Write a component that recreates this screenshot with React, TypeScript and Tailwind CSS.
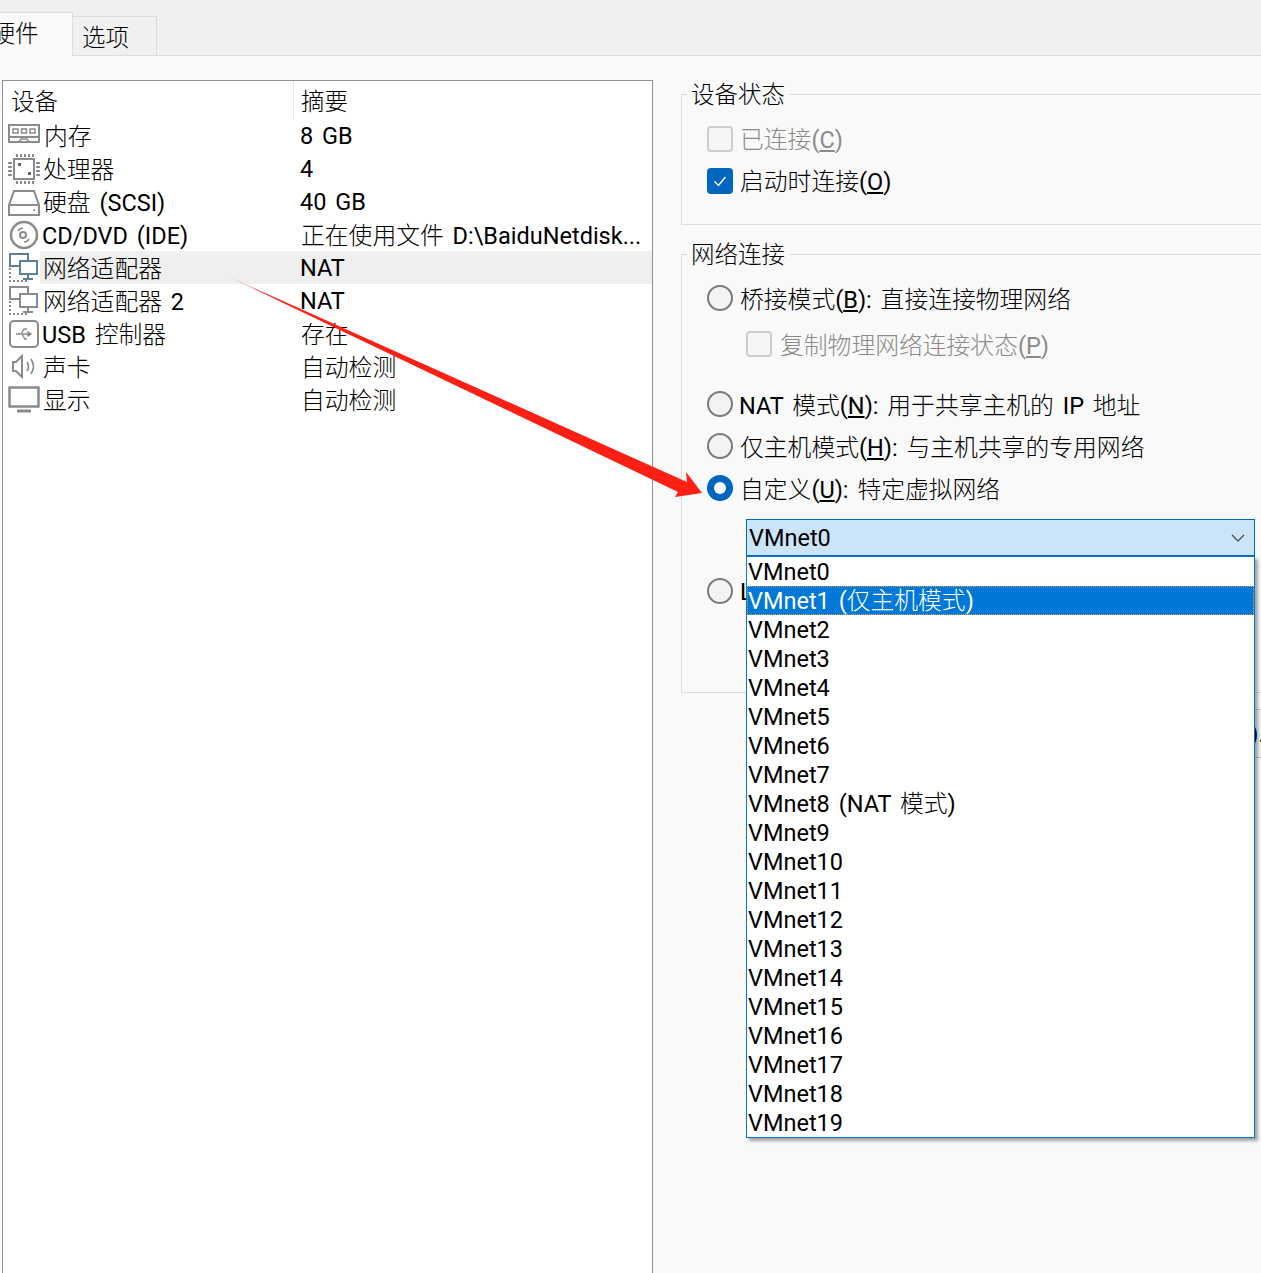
import React from "react";

const I = ({ children }: { children: React.ReactNode }) => (
  <svg width="32" height="32" viewBox="0 0 32 32" fill="none" stroke="#8b8b8b" strokeWidth="2" className="shrink-0">
    {children}
  </svg>
);

const MemoryIcon = () => (
  <I>
    <path d="M1 5h30v17H1z" />
    <path d="M1 17h30" />
    <path d="M1 22h10l2-3h6l2 3h10" strokeWidth="1.500" />
    <path d="M5 9h5v4H5zM13.500 9h5v4h-5zM22 9h5v4h-5z" strokeWidth="1.500" />
  </I>
);
const CpuIcon = () => (
  <I>
    <path d="M6 6h20v20H6z" />
    <path d="M9 1v3M13 1v3M17 1v3M21 1v3M25 1v3M9 28v3M13 28v3M17 28v3M21 28v3M25 28v3M0 10h4M0 14h4M0 18h4M0 22h4M28 10h4M28 14h4M28 18h4M28 22h4" />
    <rect x="10" y="10" width="3" height="3" fill="#666" stroke="none" />
    <rect x="20" y="19" width="3" height="3" fill="#666" stroke="none" />
  </I>
);
const DiskIcon = () => (
  <I>
    <path d="M1 19 6 5h20l5 14v10H1z" />
    <path d="M1 19h30" />
    <circle cx="26" cy="24" r="1" fill="#8b8b8b" stroke="none" />
  </I>
);
const CdIcon = () => (
  <I>
    <circle cx="16" cy="16" r="13" strokeWidth="2.500" />
    <circle cx="15" cy="16" r="3" />
    <path d="M10 12q2-3 5-3M21 20q-2 3-5 3" strokeWidth="1.500" />
  </I>
);
const NetIcon = ({ c }: { c: string }) => (
  <svg width="32" height="32" viewBox="-1 0 32 32" fill="none" stroke={c} strokeWidth="2" className="shrink-0">
    <path d="M1 2h18v12H1z" />
    <path d="M11 9h17v13H11z" fill="white" />
    <path d="M19 22v4M14 27h10" />
    <path d="M1 16v13h17" stroke="#8b8b8b" strokeDasharray="2 2" />
  </svg>
);
const UsbIcon = () => (
  <I>
    <rect x="2" y="3" width="28" height="26" rx="4" />
    <path d="M8 16h15M23 16l-3-2v4zM13 16l3-5h3M14 16l3 5h2" strokeWidth="1.400" />
  </I>
);
const SpeakerIcon = () => (
  <I>
    <path d="M8 11H5v9h3l6 6V5z" />
    <path d="M19 11q3 4.500 0 9M23 8q5 7.500 0 15" strokeWidth="1.800" />
  </I>
);
const MonitorIcon = () => (
  <I>
    <path d="M1.500 3.500h29v19h-29z" strokeWidth="2.500" />
    <path d="M9 27h14" strokeWidth="3" />
  </I>
);

const T = ({ children }: { children: string }) => (
  <>
    {children.split(/([\u4e00-\u9fff]+)/).map((p, i) =>
      i % 2 ? (
        <span key={i} className="text-[23.8px] font-light">
          {p}
        </span>
      ) : (
        p
      ),
    )}
  </>
);

const devices: { icon: React.ReactNode; name: string; sum: string; sel?: boolean; nx: string; sx: string }[] = [
  { icon: <MemoryIcon />, name: "内存", sum: "8 GB", nx: "pl-[4px]", sx: "-mt-[2px]" },
  { icon: <CpuIcon />, name: "处理器", sum: "4", nx: "pl-[3px]", sx: "-mt-[2px]" },
  { icon: <DiskIcon />, name: "硬盘 (SCSI)", sum: "40 GB", nx: "pl-[3px]", sx: "-mt-[2px]" },
  { icon: <CdIcon />, name: "CD/DVD (IDE)", sum: "正在使用文件 D:\\BaiduNetdisk...", nx: "pl-[2px]", sx: "pl-[1px]" },
  { icon: <NetIcon c="#5d7f97" />, name: "网络适配器", sum: "NAT", sel: true, nx: "pl-[3px]", sx: "-mt-[2px]" },
  { icon: <NetIcon c="#8b8b8b" />, name: "网络适配器 2", sum: "NAT", nx: "pl-[3px]", sx: "-mt-[2px]" },
  { icon: <UsbIcon />, name: "USB 控制器", sum: "存在", nx: "pl-[2px]", sx: "pl-[1px]" },
  { icon: <SpeakerIcon />, name: "声卡", sum: "自动检测", nx: "pl-[3px]", sx: "pl-[1px]" },
  { icon: <MonitorIcon />, name: "显示", sum: "自动检测", nx: "pl-[3px]", sx: "pl-[1px]" },
];

const vmnets = [
  "VMnet0",
  "VMnet1 (仅主机模式)",
  "VMnet2",
  "VMnet3",
  "VMnet4",
  "VMnet5",
  "VMnet6",
  "VMnet7",
  "VMnet8 (NAT 模式)",
  "VMnet9",
  "VMnet10",
  "VMnet11",
  "VMnet12",
  "VMnet13",
  "VMnet14",
  "VMnet15",
  "VMnet16",
  "VMnet17",
  "VMnet18",
  "VMnet19",
];

const Check = ({ on }: { on?: boolean }) =>
  on ? (
    <span className="flex h-[26px] w-[26px] shrink-0 items-center justify-center rounded-[4px] bg-[#0067c0]">
      <svg width="16" height="16" viewBox="0 0 16 16" fill="none" stroke="white" strokeWidth="1.500">
        <path d="M2.500 8.500 6.500 12.500 13.500 4" />
      </svg>
    </span>
  ) : (
    <span className="h-[26px] w-[26px] shrink-0 rounded-[4px] border-2 border-[#cdcdcd] bg-[#f6f6f6]" />
  );

const Radio = ({ on }: { on?: boolean }) =>
  on ? (
    <span className="flex h-[26px] w-[26px] shrink-0 items-center justify-center rounded-full bg-[#0067c0]">
      <span className="h-[12px] w-[12px] rounded-full bg-white" />
    </span>
  ) : (
    <span className="h-[26px] w-[26px] shrink-0 rounded-full border-2 border-[#7a7a7a] bg-[#f3f3f3]" />
  );

export default function App() {
  return (
    <div className="relative h-[1273px] w-[1261px] overflow-hidden bg-[#f9f9f9] text-[23.5px] leading-[32px] text-black [font-family:'Roboto','Noto_Sans_CJK_SC',sans-serif] [word-spacing:3px]">
      {/* tab strip */}
      <div className="flex h-[56px] items-end border-b border-[#dcdcdc] bg-[#f0f0f0]">
        <div className="-ml-[6px] -mb-px flex h-[44px] w-[79px] items-start justify-center border-r border-t border-[#dcdcdc] bg-[#f9f9f9] pt-[5px]">
          <span className="-ml-[36px] font-light">硬件</span>
        </div>
        <div className="flex h-[39px] w-[84px] items-center justify-center border-r border-t border-[#dcdcdc] bg-[#f0f0f0]">
          <span className="-ml-[18px] mt-[3px] font-light">选项</span>
        </div>
      </div>

      <div className="flex items-start pt-[24px]">
        {/* device list */}
        <div className="ml-[2px] h-[1200px] w-[651px] shrink-0 border border-[#8c9199] bg-white">
          <div className="flex h-[38px] items-center">
            <span className="w-[290px] pl-[8px] pt-[4px] font-light">设备</span>
            <span className="flex h-full items-center border-l border-[#e5e5e5] pl-[7px] pt-[4px] font-light">摘要</span>
          </div>
          {devices.map((d) => (
            <div key={d.name} className="flex h-[33px] items-center pl-[5px]">
              {d.icon}
              <span className={`flex h-[33px] grow items-center pt-[2px] ${d.sel ? "bg-[#efefef]" : ""}`}>
                <span className={`${d.nx} w-[260px] shrink-0 whitespace-nowrap`}>
                  <T>{d.name}</T>
                </span>
                <span className={`${d.sx} whitespace-nowrap`}>
                  <T>{d.sum}</T>
                </span>
              </span>
            </div>
          ))}
        </div>

        {/* settings */}
        <div className="ml-[28px] w-[640px] shrink-0">
          <fieldset className="-mt-[2px] h-[147px] border border-[#dcdcdc] pl-[25px]">
            <legend className="-ml-[20px] px-[4px] font-light">
              <span className="inline-block translate-y-px">设备状态</span>
            </legend>
            <div className="mt-[8px] flex h-[42px] items-center gap-[7px] text-[#8a8a8a]">
              <Check />
              <span className="pt-[2px]">
                <T>已连接</T>(<u>C</u>)
              </span>
            </div>
            <div className="flex h-[42px] items-center gap-[7px]">
              <Check on />
              <span className="pt-[2px]">
                <T>启动时连接</T>(<u>O</u>)
              </span>
            </div>
          </fieldset>

          <fieldset className="mt-[13px] h-[455px] border border-[#dcdcdc] pl-[25px]">
            <legend className="-ml-[20px] px-[4px] font-light">
              <span className="inline-block translate-y-px">网络连接</span>
            </legend>
            <div className="mt-[7px] flex h-[42px] items-center gap-[7px]">
              <Radio />
              <span className="pt-[4px]">
                <T>桥接模式</T>(<u>B</u>): <T>直接连接物理网络</T>
              </span>
            </div>
            <div className="ml-[39px] mt-[4px] flex h-[42px] items-center gap-[8px] text-[#8a8a8a]">
              <Check />
              <span className="pt-[4px]">
                <T>复制物理网络连接状态</T>(<u>P</u>)
              </span>
            </div>
            <div className="mt-[18px] flex h-[42px] items-center gap-[6px]">
              <Radio />
              <span className="pt-[4px]">
                NAT <T>模式</T>(<u>N</u>): <T>用于共享主机的 IP 地址</T>
              </span>
            </div>
            <div className="flex h-[42px] items-center gap-[7px]">
              <Radio />
              <span className="pt-[4px]">
                <T>仅主机模式</T>(<u>H</u>): <T>与主机共享的专用网络</T>
              </span>
            </div>
            <div className="flex h-[42px] items-center gap-[7px]">
              <Radio on />
              <span className="pt-[4px]">
                <T>自定义</T>(<u>U</u>): <T>特定虚拟网络</T>
              </span>
            </div>

            <div className="relative ml-[39px] mt-[10px] h-[37px] w-[509px]">
              <div className="flex h-[37px] items-center justify-between border border-[#0067c0] bg-[#cce4f7] pl-[2px] pr-[9px]">
                <span>VMnet0</span>
                <svg width="14" height="8" viewBox="0 0 14 8" fill="none" stroke="#444" strokeWidth="1.200">
                  <path d="M1 1l6 6 6-6" />
                </svg>
              </div>
              <div className="absolute left-0 top-[37px] z-10 h-[582px] w-[509px] border border-[#0078d7] bg-white shadow-[3px_3px_3px_rgba(0,0,0,0.35)]">
                {vmnets.map((v, i) => (
                  <div
                    key={v}
                    className={`flex h-[29px] items-center whitespace-pre pl-[1px] ${
                      i === 1 ? "bg-[#0078d7] text-white outline-1 -outline-offset-1 outline-dotted outline-[#e0a050]" : ""
                    }`}
                  >
                    <span>
                      <T>{v}</T>
                    </span>
                  </div>
                ))}
              </div>
            </div>

            <div className="mt-[14px] flex h-[42px] items-center gap-[7px]">
              <Radio />
              <span className="pt-[2px]">
                LAN <T>区段</T>(<u>L</u>):
              </span>
            </div>
          </fieldset>

          <div className="ml-[90px] mt-[16px] flex h-[49px] w-[650px] items-center justify-end border border-[#d0d0d0] bg-[#f3f3f3] pr-[143px]">
            <span>
              <T>高级</T>(V)...
            </span>
          </div>
        </div>
      </div>

      {/* red annotation arrow */}
      <svg className="pointer-events-none absolute left-0 top-0 z-20" width="1261" height="1273" viewBox="0 0 1261 1273">
        <defs>
          <linearGradient id="tail" gradientUnits="userSpaceOnUse" x1="226" y1="276" x2="280" y2="300">
            <stop offset="0" stopColor="#ff2015" stopOpacity="0.4" />
            <stop offset="1" stopColor="#ff2015" />
          </linearGradient>
        </defs>
        <path d="M226 275.500 687 482 686 472 702 493 675 497 678 492Z" fill="url(#tail)" />
      </svg>
    </div>
  );
}
